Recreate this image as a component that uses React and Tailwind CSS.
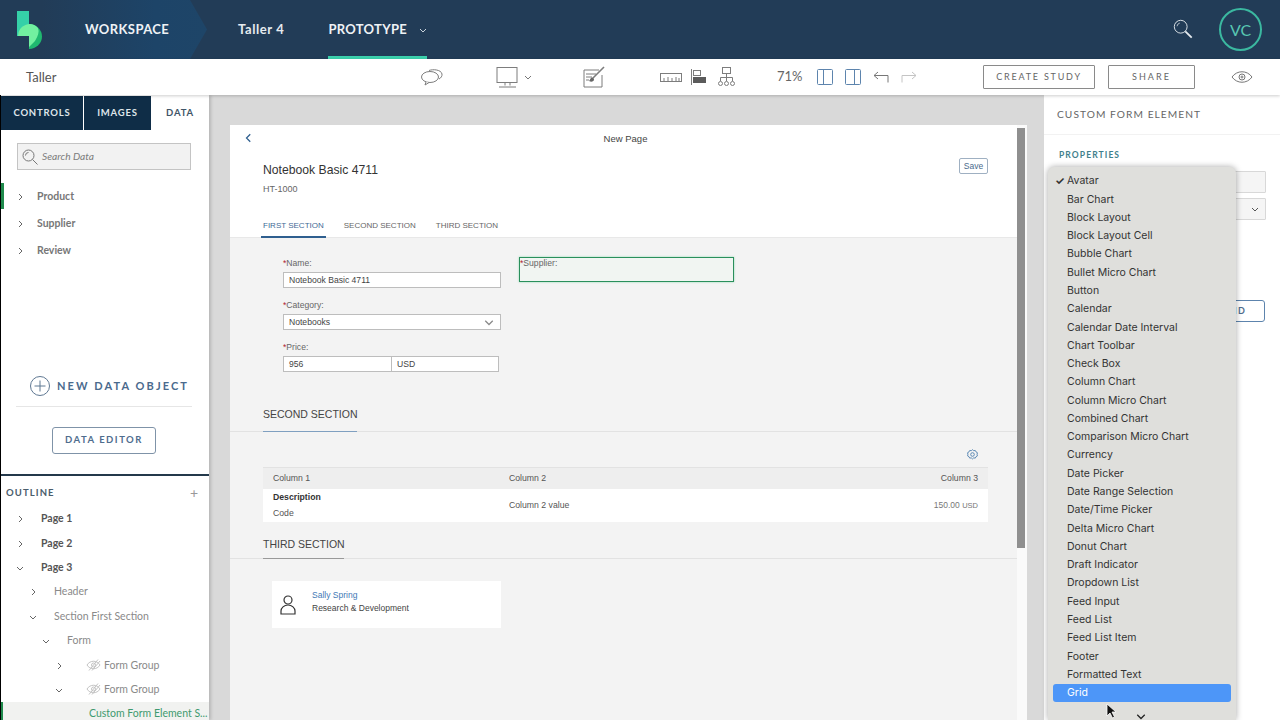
import React from "react";

const chrome = "font-['Lato','Liberation_Sans',sans-serif]";
const sap = "font-['Liberation_Sans','Arial',sans-serif]";

const dropdownItems = [
  "Avatar", "Bar Chart", "Block Layout", "Block Layout Cell", "Bubble Chart", "Bullet Micro Chart",
  "Button", "Calendar", "Calendar Date Interval", "Chart Toolbar", "Check Box", "Column Chart",
  "Column Micro Chart", "Combined Chart", "Comparison Micro Chart", "Currency", "Date Picker",
  "Date Range Selection", "Date/Time Picker", "Delta Micro Chart", "Donut Chart", "Draft Indicator",
  "Dropdown List", "Feed Input", "Feed List", "Feed List Item", "Footer", "Formatted Text",
];

function Chev({ dir = "right", className = "", size = 8, style }) {
  const d = dir === "right" ? "M3 1l3 3-3 3" : dir === "down" ? "M1 3l3 3 3-3" : "M5 1L2 4l3 3";
  return (
    <svg width={size} height={size} viewBox="0 0 8 8" fill="none" stroke="currentColor" strokeWidth="1" className={className} style={style}>
      <path d={d} />
    </svg>
  );
}

function Logo() {
  return (
    <svg width="26" height="38" viewBox="0 0 26 38" className="shrink-0">
      <rect x="0" y="0" width="12" height="25" fill="#35d0a8" />
      <path d="M12 13a13 12.500 0 0 1 0 25z" fill="#20b870" />
      <path d="M1 25A11.500 12 0 0 1 21 17Q23 22 18 30L12 36V25z" fill="#72f0a0" />
    </svg>
  );
}

function TopBar() {
  return (
    <div className={`${chrome} relative flex h-[59px] items-center bg-[#223c57] text-white`}>
      <div className="flex h-full w-[207px] items-center bg-[linear-gradient(90deg,#223c57_20%,#1d4468_75%,#1e4568)] pl-[17px] [clip-path:polygon(0_0,190px_0,207px_50%,190px_100%,0_100%)]">
        <Logo />
        <span className="ml-[42px] text-[13px] font-bold tracking-[0.4px] text-[#eef2f5]">WORKSPACE</span>
      </div>
      <span className="ml-[31px] text-[13px] font-bold tracking-[0.6px] text-[#e6ebef]">Taller 4</span>
      <div className="relative ml-[44px] flex h-full items-center">
        <span className="text-[13px] font-bold tracking-[0.3px] text-[#eef2f5]">PROTOTYPE</span>
        <Chev dir="down" className="ml-[12px] text-[#c9d3dc]" />
        <div className="absolute bottom-0 left-0 h-[3px] w-[99px] bg-[#3bd0ac]" />
      </div>
      <div className="ml-auto mr-[18px] flex items-center">
        <svg width="22" height="22" viewBox="0 0 24 24" fill="none" stroke="#e6ebef" className="mr-[25px] mt-[-2px]">
          <circle cx="9.500" cy="9.500" r="7" strokeWidth="1" />
          <path d="M5.500 9a4 4 0 0 1 3-3.500" strokeWidth="0.8" />
          <path d="M14.500 14.500l7 7" strokeWidth="2" />
        </svg>
        <div className="flex h-[43px] w-[43px] items-center justify-center rounded-full border-2 border-[#3bb8a0] text-[16px] text-[#58c6b2]">VC</div>
      </div>
    </div>
  );
}

function ToolIcons() {
  const g = "#7d7d7d";
  return (
    <>
      <svg width="22" height="17" viewBox="0 0 22 17" fill="none" stroke={g} className="ml-[421px]">
        <path d="M8 1.500c4-1.500 12-1 13 3.500 .3 2-1 4-3 5" />
        <ellipse cx="9" cy="8" rx="8.500" ry="5.500" fill="#fff" />
        <path d="M5 13l-1 3 4-2.500" fill="#fff" />
      </svg>
      <svg width="22" height="21" viewBox="0 0 22 21" fill="none" stroke={g} className="ml-[53px]">
        <rect x="1" y="0.500" width="20" height="15" />
        <path d="M9 15.500v3M14 15.500v3M3 20h17" />
      </svg>
      <Chev dir="down" className="ml-[6px] text-[#777]" />
      <svg width="22" height="22" viewBox="0 0 22 22" fill="none" stroke={g} className="ml-[51px]">
        <path d="M19 9v12H1V4h15" />
        <path d="M3 8h10M3 11h6M3 14h3" />
        <path d="M21 1L10 12" strokeWidth="1.600" />
        <path d="M8 12c2-1 3 0 3 2-1 2-3 2-5 1 1-1 1-2 2-3z" fill="#666" stroke="none" />
      </svg>
      <svg width="22" height="9" viewBox="0 0 22 9" fill="none" stroke={g} className="ml-[55px]">
        <rect x="0.500" y="0.500" width="21" height="8" />
        <path d="M4 8.500V5M8 8.500V4M12 8.500V5M16 8.500V4M19 8.500V5" />
      </svg>
      <svg width="15" height="16" viewBox="0 0 15 16" className="ml-[9px]" fill="none">
        <path d="M0.500 0v16" stroke={g} />
        <rect x="2.500" y="1.500" width="7" height="5" stroke={g} />
        <rect x="2" y="8" width="13" height="6" fill="#5b5b5b" />
      </svg>
      <svg width="17" height="20" viewBox="0 0 17 20" fill="none" stroke={g} className="ml-[12px]">
        <rect x="4.500" y="0.500" width="8" height="6" />
        <path d="M8.500 6.500v4M2.500 14v-3.500h12V14M8.500 10.500V14" />
        <rect x="0.500" y="14.500" width="4" height="4" rx="2" />
        <rect x="6.500" y="14.500" width="4" height="4" rx="2" />
        <rect x="12.500" y="14.500" width="4" height="4" rx="2" />
      </svg>
      <span className="ml-[42px] w-[24px] text-[13px] text-[#666]">71%</span>
      <svg width="16" height="16" viewBox="0 0 16 16" fill="none" stroke="#5d84ad" className="ml-[16px]">
        <rect x="0.500" y="0.500" width="15" height="15" rx="1" />
        <path d="M6.500 0.500v15" />
      </svg>
      <svg width="16" height="16" viewBox="0 0 16 16" fill="none" stroke="#5d84ad" className="ml-[12px]">
        <rect x="0.500" y="0.500" width="15" height="15" rx="1" />
        <path d="M9.500 0.500v15" />
      </svg>
      <svg width="16" height="12" viewBox="0 0 16 12" fill="none" stroke="#777" className="ml-[12px]">
        <path d="M5 1L1 4.500 5 8M1 4.500h14v7" />
      </svg>
      <svg width="16" height="12" viewBox="0 0 16 12" fill="none" stroke="#c4c4c4" className="ml-[12px]">
        <path d="M11 1l4 3.500L11 8M15 4.500H1v7" />
      </svg>
    </>
  );
}

function Toolbar() {
  return (
    <div className={`${chrome} relative z-20 flex h-[36px] items-center bg-white shadow-[0_1px_3px_rgba(0,0,0,0.2)]`}>
      <span className="absolute left-[26px] top-[9px] text-[13px] text-[#555]">Taller</span>
      <ToolIcons />
      <button className="ml-[66px] h-[24px] w-[112px] rounded-[1px] border border-[#8a8a8a] text-[9px] tracking-[1.800px] text-[#666]">CREATE STUDY</button>
      <button className="ml-[13px] h-[24px] w-[87px] rounded-[1px] border border-[#8a8a8a] text-[9px] tracking-[2.100px] text-[#666]">SHARE</button>
      <svg width="22" height="12" viewBox="0 0 22 12" fill="none" stroke="#777" className="ml-[36px]">
        <path d="M1 6c5-7 15-7 20 0-5 7-15 7-20 0z" />
        <circle cx="11" cy="6" r="3" />
        <circle cx="11" cy="6" r="1" />
      </svg>
    </div>
  );
}

function TreeRow({ label, dir, indent, labelLeft, className = "" }) {
  return (
    <div className={`flex h-[24.4px] items-center ${className}`}>
      {dir && <Chev dir={dir} size={8} className="absolute text-[#666]" style={{ left: indent }} />}
      <span style={{ marginLeft: labelLeft }}>{label}</span>
    </div>
  );
}

function EyeOff() {
  return (
    <svg width="15" height="12" viewBox="0 0 15 12" fill="none" stroke="#c3c3c3" className="absolute left-[85px] mt-[1px]">
      <path d="M1 6c3-5 10-5 13 0-3 5-10 5-13 0z" />
      <circle cx="7.500" cy="6" r="2" />
      <path d="M12 0.500L3 11.500M14 2L6 11.500" />
    </svg>
  );
}

function LeftPanel() {
  return (
    <aside className={`${chrome} relative z-10 flex h-full w-[209px] shrink-0 flex-col overflow-hidden border-l border-black bg-white shadow-[2px_0_3px_rgba(0,0,0,0.16)] [&>*]:shrink-0`}>
      <div className="flex h-[35px] pt-[1px] text-[9.5px] font-bold tracking-[0.8px]">
        <div className="flex w-[82px] items-center justify-center bg-[#0f2d47] text-[#dfe5ea]">CONTROLS</div>
        <div className="ml-px flex w-[67px] items-center justify-center bg-[#0f2d47] text-[#dfe5ea]">IMAGES</div>
        <div className="flex flex-1 items-center justify-center text-[#3f5568]">DATA</div>
      </div>
      <div className="ml-[16px] mt-[13px] flex h-[27px] w-[174px] items-center border border-[#c4c4c4] bg-[#f2f2f2]">
        <svg width="16" height="16" viewBox="0 0 16 16" fill="none" stroke="#777" className="ml-[4px]">
          <circle cx="6.500" cy="6.500" r="5.500" />
          <path d="M3.500 6.500a3 3 0 0 1 3-3M10.500 10.500l5 5" />
        </svg>
        <span className="ml-[4px] text-[10.2px] italic text-[#7c7c7c]">Search Data</span>
      </div>
      <div className="relative mt-[13px] text-[10.5px] font-bold text-[#777]">
        <div className="absolute left-[-1px] top-0 h-[26px] w-[4px] bg-[#1f8a4c]" />
        {["Product", "Supplier", "Review"].map((label) => (
          <div key={label} className="flex h-[27px] items-center">
            <Chev className="ml-[15px] text-[#666]" />
            <span className="ml-[13px]">{label}</span>
          </div>
        ))}
      </div>
      <div className="ml-[15px] mt-[103px] flex h-[40px] w-[176px] items-center border-b border-[#e6e6e6] pb-[1px]">
        <svg width="20" height="20" viewBox="0 0 20 20" fill="none" stroke="#5f7892" className="ml-[14px]">
          <circle cx="10" cy="10" r="9.500" />
          <path d="M10 4.500v11M4.500 10h11" />
        </svg>
        <span className="ml-[7px] text-[11px] font-bold tracking-[2.100px] text-[#4a6a8d]">NEW DATA OBJECT</span>
      </div>
      <button className="ml-[51px] mt-[20px] h-[27px] w-[104px] rounded-[3px] border border-[#7f93a8] text-[9.5px] font-bold tracking-[1.500px] text-[#4f6d8e]">DATA EDITOR</button>
      <div className="mt-[20px] h-[2px] bg-[#24394b]" />
      <div className="flex h-[31px] items-center justify-between pl-[5px] pr-[11px] pt-[3px]">
        <span className="text-[9.5px] font-bold tracking-[1.100px] text-[#4a5d6c]">OUTLINE</span>
        <span className="text-[14px] leading-none text-[#999]">+</span>
      </div>
      <div className="relative text-[10.5px] text-[#8a8a8a]">
        <TreeRow label="Page 1" dir="right" indent={15} labelLeft={40} className="font-bold text-[#555]" />
        <TreeRow label="Page 2" dir="right" indent={15} labelLeft={40} className="font-bold text-[#555]" />
        <TreeRow label="Page 3" dir="down" indent={15} labelLeft={40} className="font-bold text-[#555]" />
        <TreeRow label="Header" dir="right" indent={28} labelLeft={53} />
        <TreeRow label="Section First Section" dir="down" indent={28} labelLeft={53} />
        <TreeRow label="Form" dir="down" indent={41} labelLeft={66} />
        <TreeRow label={<><EyeOff />Form Group</>} dir="right" indent={54} labelLeft={103} />
        <TreeRow label={<><EyeOff />Form Group</>} dir="down" indent={54} labelLeft={103} />
        <div className="flex h-[24px] items-center whitespace-nowrap border-l-2 border-[#1f8a4c] bg-[#f1f2f0] pl-[86px] text-[#3f9a6f]">Custom Form Element S...</div>
      </div>
    </aside>
  );
}

function Field({ label, children, className = "" }) {
  return (
    <div className={className}>
      <div className="h-[15px] text-[8.6px] leading-[12px] text-[#666]"><span className="text-[#b0212f]">*</span>{label}</div>
      {children}
    </div>
  );
}

const inputCls = "flex h-[16px] items-center border border-[#bdbdbd] bg-white pl-[5px] text-[8.6px] text-[#444]";

function Canvas() {
  return (
    <section className="min-w-0 flex-1 bg-[#d9d9d9] pl-[21px] pt-[30px]">
      <div className={`${sap} flex h-[600px] w-[797px] bg-[#fafafa]`}>
        <div className="w-[787px] bg-[#f3f3f3]">
          <div className="relative h-[113px] border-b border-[#e8e8e8] bg-white">
            <Chev dir="left" size={10} className="absolute left-[14px] top-[8px] text-[#2f5f8f]" />
            <div className="pl-[4px] pt-[7px] text-center text-[9.5px] text-[#444]">New Page</div>
            <div className="ml-[33px] mt-[15px] text-[12.2px] text-[#333]">Notebook Basic 4711</div>
            <div className="ml-[33px] mt-[3px] text-[9px] text-[#666]">HT-1000</div>
            <button className="absolute right-[29px] top-[33px] h-[16px] w-[29px] rounded-[2px] border border-[#9fb0c2] text-[8.5px] text-[#4a6a8d]">Save</button>
            <div className="absolute bottom-[-1px] left-[31px] flex text-[8px] leading-[12px] text-[#666]">
              <div className="h-[18px] border-b-2 border-[#2f5f8f] px-[2px] text-[#3f6a96]">FIRST SECTION</div>
              <div className="ml-[16px] px-[2px]">SECOND SECTION</div>
              <div className="ml-[16px] px-[2px]">THIRD SECTION</div>
            </div>
          </div>

          <div className="flex items-start pl-[53px]">
            <div className="w-[218px] pt-[19px]">
              <Field label="Name:">
                <div className={inputCls}>Notebook Basic 4711</div>
              </Field>
              <Field label="Category:" className="mt-[11px]">
                <div className={`${inputCls} justify-between pr-[6px]`}>
                  Notebooks
                  <Chev dir="down" size={10} className="text-[#8a8a8a]" />
                </div>
              </Field>
              <Field label="Price:" className="mt-[11px]">
                <div className="flex">
                  <div className={`${inputCls} w-[109px]`}>956</div>
                  <div className={`${inputCls} ml-[-1px] w-[108px]`}>USD</div>
                </div>
              </Field>
            </div>
            <div className="ml-[18px] mt-[19px] h-[25px] w-[215px] border border-[#2a8f5c] bg-[#f1f5f2] text-[8.6px] leading-[10px] text-[#666] shadow-[0_0_2px_#8fd8b0]">
              <span className="text-[#b0212f]">*</span>Supplier:
            </div>
          </div>

          <div className="mt-[35px] flex h-[25px] items-start border-b border-[#e2e2e2] pl-[33px]">
            <div className="h-[25px] w-[94px] whitespace-nowrap border-b border-[#7f9fc0] text-[10.5px] leading-[14px] text-[#444]">SECOND SECTION</div>
          </div>

          <div className="flex h-[35px] items-center justify-end pr-[39px] pt-[9px]">
            <svg width="11" height="11" viewBox="0 0 11 11" fill="none" stroke="#5d8ab5">
              <path d="M5.500 0.700l1.200 1 1.600-.2.700 1.400 1.400.8-.3 1.600.3 1.600-1.400.8-.7 1.400-1.600-.2-1.200 1-1.200-1-1.600.2-.7-1.400-1.400-.8.3-1.600-.3-1.600 1.400-.8.7-1.400 1.600.2z" />
              <circle cx="5.500" cy="5.500" r="1.800" />
            </svg>
          </div>
          <div className="ml-[33px] w-[725px] text-[8.7px] text-[#555]">
            <div className="flex h-[22px] items-center border-t border-[#e2e2e2] bg-[#eeeeee]">
              <span className="ml-[10px] w-[236px]">Column 1</span>
              <span>Column 2</span>
              <span className="ml-auto mr-[10px]">Column 3</span>
            </div>
            <div className="flex h-[33px] items-center bg-white">
              <div className="ml-[10px] w-[236px]">
                <div className="font-bold text-[#333]">Description</div>
                <div className="mt-[2px]">Code</div>
              </div>
              <span>Column 2 value</span>
              <span className="ml-auto mr-[10px] text-[8.5px] text-[#777]">150.00 <span className="text-[7.5px]">USD</span></span>
            </div>
          </div>

          <div className="mt-[15px] flex h-[22px] items-start border-b border-[#e2e2e2] pl-[33px]">
            <div className="h-[22px] w-[81px] whitespace-nowrap border-b border-[#999] text-[10.5px] leading-[14px] text-[#444]">THIRD SECTION</div>
          </div>

          <div className="ml-[42px] mt-[22px] flex h-[47px] w-[229px] items-center bg-white">
            <svg width="16" height="20" viewBox="0 0 16 20" fill="none" stroke="#333" strokeWidth="1.200" className="ml-[8px]">
              <circle cx="8" cy="5" r="4" />
              <path d="M1 19v-3c0-3 3-6 7-6s7 3 7 6v3z" />
            </svg>
            <div className="mb-[6px] ml-[16px] text-[8.5px] leading-[13px]">
              <div className="text-[#3f78b5]">Sally Spring</div>
              <div className="text-[#444]">Research &amp; Development</div>
            </div>
          </div>
        </div>
        <div className="w-[10px] pt-[3px]">
          <div className="h-[420px] w-[8px] bg-[#8f8f8f]" />
        </div>
      </div>
    </section>
  );
}

function RightPanel() {
  return (
    <aside className={`${chrome} relative z-10 w-[236px] shrink-0 bg-white`}>
      <div className="flex h-[40px] items-center border-b border-[#f2f2f2] pl-[13px] pt-[1px] text-[10.2px] tracking-[1.050px] text-[#666]">CUSTOM FORM ELEMENT</div>
      <div className="pl-[15px] pt-[14px] text-[8.5px] font-bold tracking-[1.100px] text-[#3f7f8c]">PROPERTIES</div>
      <div className="ml-[180px] mt-[9px] h-[22px] w-[42px] rounded-[1px] border border-[#d8d8d8] bg-[#f5f5f5]" />
      <div className="ml-[180px] mt-[5px] flex h-[22px] w-[42px] items-center justify-end rounded-[1px] border border-[#d8d8d8] bg-[#f5f5f5] pr-[6px]">
        <Chev dir="down" className="text-[#555]" />
      </div>
      <div className="ml-[170px] mt-[80px] flex h-[22px] w-[51px] items-center justify-end rounded-[3px] border border-[#5d84ad] pr-[18px] text-[9px] font-bold tracking-[1.200px] text-[#4f6d8e]">ND</div>
    </aside>
  );
}

function Dropdown() {
  return (
    <div className="absolute left-[1048px] top-[167px] z-30 h-[553px] w-[188px] rounded-t-[6px] bg-[#dfdfdc] pt-[5px] font-['Inter','Liberation_Sans',sans-serif] text-[10.5px] text-[#333] shadow-[0_0_6px_rgba(0,0,0,0.35)]">
      {dropdownItems.map((item, i) => (
        <div key={item} className="relative flex h-[18.29px] items-center pl-[19px]">
          {i === 0 && <span className="absolute left-[7px] text-[11px] font-bold">✓</span>}
          {item}
        </div>
      ))}
      <div className="mx-[5px] flex h-[18.29px] items-center rounded-[3px] bg-[#4d96f8] pl-[14px] text-white">Grid</div>
      <Chev dir="down" size={10} className="absolute bottom-[-1px] left-[88px] text-[#222]" />
      <svg width="13" height="17" viewBox="0 0 13 17" className="absolute left-[58px] top-[536px]">
        <path d="M1 1v12l3-3 2.500 5 2-1-2.500-5h4z" fill="#111" stroke="#fff" strokeWidth="0.8" />
      </svg>
    </div>
  );
}

export default function App() {
  return (
    <div className="relative h-[720px] w-[1280px] overflow-hidden bg-white">
      <TopBar />
      <Toolbar />
      <div className="flex h-[625px]">
        <LeftPanel />
        <Canvas />
        <RightPanel />
      </div>
      <Dropdown />
    </div>
  );
}
